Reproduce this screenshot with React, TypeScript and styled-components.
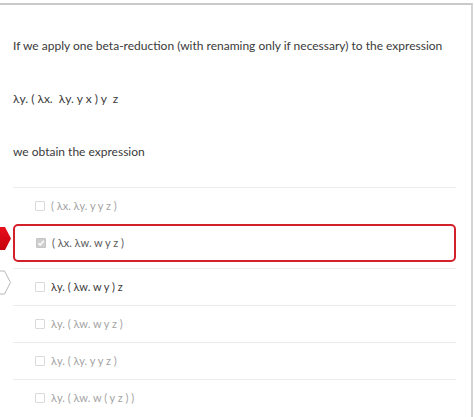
import React from "react";
import styled, { createGlobalStyle } from "styled-components";

const Global = createGlobalStyle`
  html, body { margin: 0; padding: 0; background: #ffffff; }
  body { font-family: Lato, "Open Sans", "DejaVu Sans", sans-serif; }
`;

const Page = styled.div`
  position: relative;
  width: 474px;
  height: 417px;
  overflow: hidden;
  padding-top: 3px;
  box-sizing: border-box;
`;

const Panel = styled.div`
  width: 473px;
  height: 414px;
  box-sizing: border-box;
  border-top: 2px solid #c9c9c9;
  border-right: 2px solid #d4d4d4;
  padding: 31px 15px 0 13px;
  display: flex;
  flex-direction: column;
`;

const Para = styled.p`
  margin: 0 0 34px 0;
  font-size: 12px;
  line-height: 19px;
  color: #3a3a3a;
  white-space: pre-wrap;
`;

const List = styled.div`
  margin-top: -8px;
  display: flex;
  flex-direction: column;
`;

const Row = styled.div<{ $selected?: boolean }>`
  display: flex;
  align-items: center;
  gap: 6px;
  box-sizing: border-box;
  height: ${(p) => (p.$selected ? "38px" : "37px")};
  padding-left: ${(p) => (p.$selected ? "21px" : "22px")};
  border-top: ${(p) => (p.$selected ? "2px solid #d3212c" : "1px solid #ececec")};
  border-left: ${(p) => (p.$selected ? "2px solid #d3212c" : "none")};
  border-right: ${(p) => (p.$selected ? "2px solid #d3212c" : "none")};
  border-bottom: ${(p) => (p.$selected ? "2px solid #d3212c" : "none")};
  border-radius: ${(p) => (p.$selected ? "5px" : "0")};
  margin-bottom: ${(p) => (p.$selected ? "6px" : "0")};
`;

const Box = styled.span<{ $checked?: boolean }>`
  width: 10px;
  height: 10px;
  box-sizing: border-box;
  border: 1px solid ${(p) => (p.$checked ? "#c4c4c4" : "#dadada")};
  border-radius: 1px;
  background: ${(p) => (p.$checked ? "#cfcfcf" : "#ffffff")};
  display: flex;
  align-items: center;
  justify-content: center;
  flex: none;
`;

const Label = styled.span<{ $tone: "light" | "mid" | "dark" }>`
  font-size: 11px;
  line-height: 14px;
  white-space: pre;
  color: ${(p) => (p.$tone === "light" ? "#a3a3a3" : p.$tone === "mid" ? "#5a5a5a" : "#3a3a3a")};
`;

const Marker = styled.svg<{ $top: number }>`
  position: absolute;
  left: 0;
  top: ${(p) => p.$top}px;
`;

const answers: { text: string; tone: "light" | "mid" | "dark"; selected?: boolean }[] = [
  { text: "( λx. λy. y y z )", tone: "light" },
  { text: "( λx. λw. w y z )", tone: "mid", selected: true },
  { text: "λy. ( λw. w y ) z", tone: "dark" },
  { text: "λy. ( λw. w y z )", tone: "light" },
  { text: "λy. ( λy. y y z )", tone: "light" },
  { text: "λy. ( λw. w ( y z ) )", tone: "light" },
];

export default function App() {
  return (
    <>
      <Global />
      <Page>
        <Panel>
          <Para>If we apply one beta-reduction (with renaming only if necessary) to the expression</Para>
          <Para>{"λy. ( λx.  λy. y x ) y  z"}</Para>
          <Para>we obtain the expression</Para>
          <List>
            {answers.map((a, i) => (
              <Row key={i} $selected={a.selected}>
                <Box $checked={a.selected}>
                  {a.selected && (
                    <svg width="8" height="8" viewBox="0 0 8 8">
                      <path d="M1.3 4.2 L3.2 6 L6.8 1.8" stroke="#ffffff" strokeWidth="1.4" fill="none" />
                    </svg>
                  )}
                </Box>
                <Label $tone={a.tone}>{a.text}</Label>
              </Row>
            ))}
          </List>
        </Panel>
        <Marker $top={226} width="12" height="26" viewBox="0 0 12 26">
          <defs>
            <linearGradient id="rg" x1="0" y1="0" x2="0" y2="1">
              <stop offset="0" stopColor="#e8101c" />
              <stop offset="1" stopColor="#c4000c" />
            </linearGradient>
          </defs>
          <polygon points="0,1 5,1 11,12.5 5,24 0,24" fill="url(#rg)" />
        </Marker>
        <Marker $top={270} width="12" height="26" viewBox="0 0 12 26">
          <polygon points="-1,1 4.5,1 10.5,12.5 4.5,24 -1,24" fill="#ffffff" stroke="#b8b8b8" strokeWidth="1" />
        </Marker>
      </Page>
    </>
  );
}
